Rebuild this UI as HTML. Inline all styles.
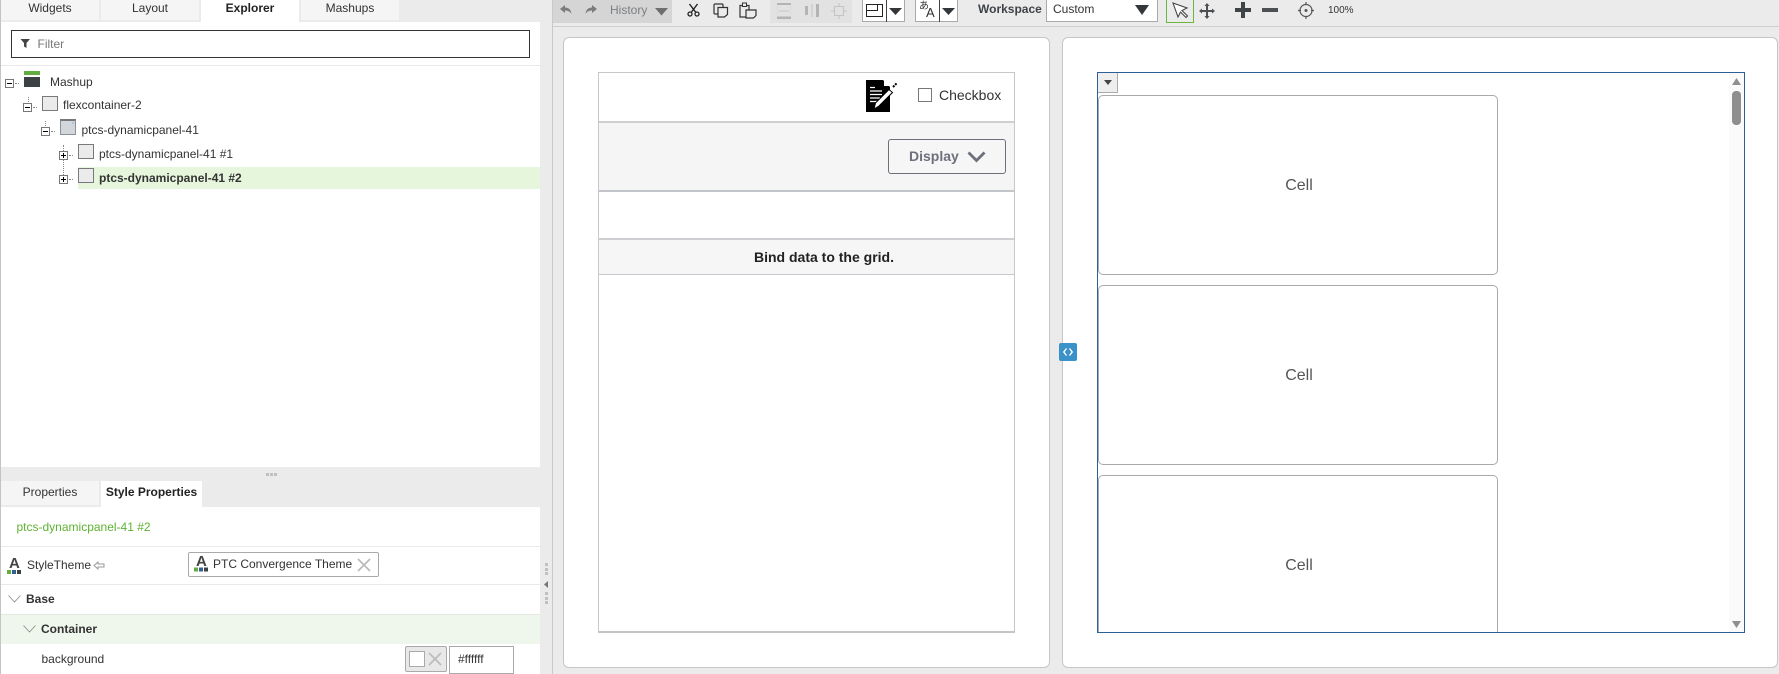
<!DOCTYPE html>
<html><head><meta charset="utf-8"><style>
html,body{margin:0;padding:0;width:1779px;height:674px;overflow:hidden;background:#ebebeb}
body{position:relative;font-family:"Liberation Sans",Arial,sans-serif;font-size:12px;color:#333}
div,svg{position:absolute;box-sizing:border-box}
.t{white-space:nowrap;height:20px;line-height:20px}
.b{font-weight:bold}
.tab{background:#f5f5f5;text-align:center;line-height:16px;height:20px;top:0;width:98px}
.exp{width:9px;height:9px;border:1px solid #777;background:#fff}
.exp:before{content:"";position:absolute;left:1px;top:3px;width:5px;height:1px;background:#000}
.plus:after{content:"";position:absolute;left:3px;top:1px;width:1px;height:5px;background:#000}
.sq{width:16px;height:15px;border:1.5px solid #77797c;background:#ebebeb}
.vd{width:0;border-left:1px dotted #888}
.hd{height:0;border-top:1px dotted #888;width:4px}
.cell{left:1098px;width:400px;border:1px solid #aaa;border-radius:5px;background:#fff}
.ct{left:1099px;width:400px;text-align:center;font-size:16px;color:#555;height:20px;line-height:20px}
.dot{width:3px;height:3px;background:#c0c0c0}
</style></head><body>

<!-- left panel -->
<div style="left:0;top:0;width:540px;height:674px;background:#fff;border-left:1px solid #c4c4c4"></div>
<div style="left:1px;top:0;width:539px;height:22px;background:#ebebeb"></div>
<div class="tab" style="left:1px">Widgets</div>
<div class="tab" style="left:101px">Layout</div>
<div class="tab b" style="left:201px;background:#fff;height:23px;color:#222">Explorer</div>
<div class="tab" style="left:301px">Mashups</div>
<div style="left:11px;top:30px;width:519px;height:28px;border:1.5px solid #333"></div>
<svg style="left:20px;top:38px" width="11" height="11" viewBox="0 0 11 11"><path d="M0.5 1H10L6.5 5V10L4 8.5V5Z" fill="#444"/></svg>
<div class="t" style="left:37.5px;top:33.5px;color:#777">Filter</div>
<div style="left:1px;top:64.5px;width:539px;height:1.5px;background:#e9e9e9"></div>

<div class="exp" style="left:5px;top:79px"></div><div class="hd" style="left:15px;top:83px"></div>
<div style="left:24px;top:71px;width:16px;height:4px;background:#62ad3f"></div>
<div style="left:24px;top:77px;width:16px;height:10px;background:#3c4144"></div>
<div class="t" style="left:50px;top:72px">Mashup</div>

<div class="vd" style="left:27.5px;top:97px;height:7px"></div>
<div class="exp" style="left:23px;top:103px"></div><div class="hd" style="left:33px;top:107px"></div>
<div class="sq" style="left:42px;top:96px"></div>
<div class="t" style="left:63px;top:94.5px">flexcontainer-2</div>

<div class="vd" style="left:45px;top:121px;height:7px"></div>
<div class="exp" style="left:41px;top:127px"></div><div class="hd" style="left:51px;top:131px"></div>
<div style="left:60px;top:119px;width:16px;height:16px;border:1px solid #8b9096;background:#d3d6da;border-top:2px solid #777"></div>
<div style="left:72px;top:122px;width:2px;height:2px;background:#a9c6dc"></div>
<div class="t" style="left:81.5px;top:119.5px">ptcs-dynamicpanel-41</div>

<div class="vd" style="left:63px;top:145px;height:36px"></div>
<div class="exp plus" style="left:59px;top:151px"></div><div class="hd" style="left:69px;top:155px"></div>
<div class="sq" style="left:78px;top:144px"></div>
<div class="t" style="left:99px;top:143.5px">ptcs-dynamicpanel-41 #1</div>

<div style="left:78px;top:167px;width:462px;height:22px;background:#e6f6dd"></div>
<div class="exp plus" style="left:59px;top:175px"></div><div class="hd" style="left:69px;top:179px"></div>
<div class="sq" style="left:78px;top:168px"></div>
<div class="t b" style="left:99px;top:167.5px">ptcs-dynamicpanel-41 #2</div>

<!-- bottom panel -->
<div style="left:1px;top:467px;width:539px;height:40px;background:#ebebeb"></div>
<div class="dot" style="left:266px;top:473px;width:2.5px;height:2.5px"></div><div class="dot" style="left:270px;top:473px;width:2.5px;height:2.5px"></div><div class="dot" style="left:274px;top:473px;width:2.5px;height:2.5px"></div>
<div class="tab" style="left:1px;top:481px;height:24px;line-height:22px">Properties</div>
<div class="tab b" style="left:101px;top:481px;height:26px;width:101px;background:#fff;line-height:22px;color:#222">Style Properties</div>
<div class="t" style="left:16.5px;top:517px;color:#5fb233">ptcs-dynamicpanel-41 #2</div>
<div style="left:1px;top:546px;width:539px;height:1px;background:#e9e9e9"></div>

<svg style="left:7px;top:557px" width="15" height="18" viewBox="0 0 15 18"><text x="2" y="11" font-family="Liberation Sans" font-weight="bold" font-size="15" fill="#444">A</text><rect x="0" y="13" width="4" height="4" fill="#62ad3f"/><rect x="5" y="13" width="4" height="4" fill="#33618f"/><rect x="10" y="13" width="4" height="4" fill="#3c4144"/></svg>
<div class="t" style="left:27px;top:555px">StyleTheme</div>
<svg style="left:93px;top:561px" width="12" height="9" viewBox="0 0 12 9"><path d="M5 1L1 4.5L5 8V6H11V3H5Z" fill="none" stroke="#999"/></svg>
<div style="left:188px;top:552px;width:191px;height:25px;border:1px solid #aaa;border-radius:2px;background:#fff"></div>
<svg style="left:194px;top:555px" width="15" height="18" viewBox="0 0 15 18"><text x="2" y="11" font-family="Liberation Sans" font-weight="bold" font-size="15" fill="#444">A</text><rect x="0" y="12.5" width="4" height="4" fill="#62ad3f"/><rect x="5" y="12.5" width="4" height="4" fill="#33618f"/><rect x="10" y="12.5" width="4" height="4" fill="#3c4144"/></svg>
<div class="t" style="left:213px;top:554px">PTC Convergence Theme</div>
<svg style="left:357px;top:558px" width="14" height="14" viewBox="0 0 14 14"><path d="M1 1L13 13M13 1L1 13" stroke="#bcbcbc" stroke-width="1.8"/></svg>
<div style="left:1px;top:584px;width:539px;height:1px;background:#e9e9e9"></div>
<svg style="left:8px;top:595px" width="13" height="8" viewBox="0 0 13 8"><path d="M.5 .5L6.5 7L12.5 .5" fill="none" stroke="#888" stroke-width=".8"/></svg>
<div class="t b" style="left:26px;top:588.5px">Base</div>
<div style="left:1px;top:614px;width:539px;height:30px;background:#eff6ec;border-top:1px solid #e5e8e3"></div>
<svg style="left:23px;top:625px" width="13" height="8" viewBox="0 0 13 8"><path d="M.5 .5L6.5 7L12.5 .5" fill="none" stroke="#888" stroke-width=".8"/></svg>
<div class="t b" style="left:41px;top:618.5px">Container</div>
<div class="t" style="left:41.5px;top:648.5px">background</div>
<div style="left:405px;top:646px;width:42px;height:26px;background:#e8e8e8;border:1px solid #aaa;border-radius:2px"></div>
<div style="left:409px;top:651px;width:16px;height:16px;background:#fff;border:1px solid #aaa"></div>
<svg style="left:428px;top:652px" width="14" height="14" viewBox="0 0 14 14"><path d="M1 1L13 13M13 1L1 13" stroke="#bcbcbc" stroke-width="1.8"/></svg>
<div style="left:449px;top:646px;width:65px;height:28px;background:#fff;border:1px solid #aaa"></div>
<div class="t" style="left:458px;top:649px">#ffffff</div>

<!-- splitter -->
<div style="left:552px;top:0;width:1px;height:674px;background:#c9c9c9"></div>
<div class="dot" style="left:544.5px;top:563px"></div><div class="dot" style="left:544.5px;top:568px"></div><div class="dot" style="left:544.5px;top:572px"></div>
<svg style="left:544px;top:581px" width="5" height="7" viewBox="0 0 5 7"><path d="M0 3.5L4 0V7Z" fill="#777"/></svg>
<div class="dot" style="left:544.5px;top:592px"></div><div class="dot" style="left:544.5px;top:597px"></div><div class="dot" style="left:544.5px;top:601px"></div>

<!-- toolbar -->
<div style="left:553px;top:26px;width:1226px;height:1px;background:#cfcfcf"></div>
<div style="left:553px;top:0;width:119px;height:23px;background:#d5d5d5"></div>
<svg style="left:560px;top:5px" width="12" height="10" viewBox="0 0 12 10"><path d="M5 0L0 4L5 8V5.5C8 5.5 10 6.5 11.5 9C11 5 9 2.5 5 2.5Z" fill="#7c7c7c"/></svg>
<svg style="left:585px;top:5px" width="12" height="10" viewBox="0 0 12 10"><path d="M7 0L12 4L7 8V5.5C4 5.5 2 6.5 .5 9C1 5 3 2.5 7 2.5Z" fill="#7c7c7c"/></svg>
<div class="t" style="left:610px;top:0;color:#7b7f84">History</div>
<svg style="left:655px;top:8px" width="13" height="8" viewBox="0 0 13 8"><path d="M0 0H13L6.5 7.5Z" fill="#6e6e6e"/></svg>
<svg style="left:687px;top:3px" width="13" height="14" viewBox="0 0 13 14"><path d="M2.5 1L8.5 9M10.5 1L4.5 9" stroke="#222" stroke-width="1.4"/><circle cx="3" cy="11" r="2" fill="none" stroke="#222" stroke-width="1.3"/><circle cx="10" cy="11" r="2" fill="none" stroke="#222" stroke-width="1.3"/></svg>
<svg style="left:713px;top:3px" width="16" height="15" viewBox="0 0 16 15"><rect x="1" y="1" width="9" height="10" rx="1" fill="#ebebeb" stroke="#333" stroke-width="1.2"/><path d="M5 4.5H14.5V11.500L11.500 14H5Z" fill="#ebebeb" stroke="#333" stroke-width="1.2"/></svg>
<svg style="left:739px;top:2px" width="18" height="17" viewBox="0 0 18 17"><path d="M1 3.5H10V15H1Z" fill="#ebebeb" stroke="#333" stroke-width="1.2"/><rect x="3.5" y="1" width="4" height="3.5" fill="#ebebeb" stroke="#333"/><path d="M7 8H17V13.5L14.5 16H7Z" fill="#ebebeb" stroke="#333" stroke-width="1.2"/></svg>
<div style="left:770px;top:0;width:82px;height:23px;background:#e2e2e2"></div>
<svg style="left:777px;top:3px" width="14" height="16" viewBox="0 0 14 16"><path d="M0 0H14V2H0Z M0 13.5H14V16H0Z" fill="#b4b4b4"/><path d="M0 4V12M14 4V12" stroke="#c4c4c4" stroke-dasharray="1 1"/><path d="M2 8H12" stroke="#c4c4c4"/></svg>
<svg style="left:805px;top:3px" width="14" height="16" viewBox="0 0 14 16"><path d="M0 3H3V12H0Z M11 1H14V14H11Z" fill="#b4b4b4"/><path d="M7 1V14" stroke="#c4c4c4"/></svg>
<svg style="left:831px;top:3px" width="16" height="16" viewBox="0 0 16 16"><rect x="3.5" y="3.5" width="9" height="9" fill="none" stroke="#c4c4c4"/><path d="M8 0V3M8 13V16M0 8H3M13 8H16" stroke="#c4c4c4"/></svg>

<div style="left:862px;top:-1px;width:43px;height:23px;background:#fff;border:1px solid #aaa"></div>
<div style="left:886px;top:0;width:1px;height:22px;background:#444"></div>
<svg style="left:866px;top:4px" width="17" height="13" viewBox="0 0 17 13"><path d="M.5 .5H16.5V12.5H.5ZM.5 6.5H11.5V.5" fill="none" stroke="#222"/></svg>
<svg style="left:889px;top:8px" width="13" height="7" viewBox="0 0 13 7"><path d="M0 0H13L6.5 7Z" fill="#33373a"/></svg>
<div style="left:915px;top:-1px;width:43px;height:23px;background:#fff;border:1px solid #aaa"></div>
<div style="left:939px;top:0;width:1px;height:22px;background:#444"></div>
<div style="left:919px;top:1px;font-size:10px;line-height:11px;font-family:'Liberation Sans','Noto Sans CJK JP',sans-serif;color:#333">あ</div>
<div style="left:926px;top:6px;font-size:13px;line-height:14px;color:#333">A</div>
<svg style="left:942px;top:8px" width="13" height="7" viewBox="0 0 13 7"><path d="M0 0H13L6.5 7Z" fill="#33373a"/></svg>

<div class="t b" style="left:978px;top:-1px;color:#3f4347">Workspace</div>
<div style="left:1046px;top:-1px;width:112px;height:23px;background:#fff;border:1px solid #aaa"></div>
<div class="t" style="left:1053px;top:-1px">Custom</div>
<svg style="left:1135px;top:5px" width="14" height="10" viewBox="0 0 14 10"><path d="M0 0H14L7 10Z" fill="#33373a"/></svg>
<div style="left:1166px;top:-1px;width:28px;height:24px;border:1px solid #6db33f"></div>
<svg style="left:1172px;top:2px" width="17" height="17" viewBox="0 0 17 17"><path d="M1 1L6 15L8.5 10L14 15.5L15.5 14L10 8.5L15 6Z" fill="#fff" stroke="#444" stroke-width="1.1"/></svg>
<svg style="left:1199px;top:3px" width="16" height="16" viewBox="0 0 16 16"><path d="M8 0L10.5 3H9V7H13V5.5L16 8L13 10.5V9H9V13H10.5L8 16L5.5 13H7V9H3V10.5L0 8L3 5.5V7H7V3H5.5Z" fill="#4c5053"/></svg>
<div style="left:1235px;top:8px;width:16px;height:4px;background:#3f4447"></div><div style="left:1241px;top:2px;width:4px;height:16px;background:#3f4447"></div>
<div style="left:1262px;top:8px;width:16px;height:4px;background:#4c5053"></div>
<svg style="left:1298px;top:2px" width="16" height="17" viewBox="0 0 16 17"><circle cx="8" cy="8.5" r="6" fill="none" stroke="#555" stroke-width="1.2"/><circle cx="8" cy="8.5" r="1.5" fill="#555"/><path d="M8 0V3M8 14V17M0 8.5H3M13 8.5H16" stroke="#555" stroke-width="1.2"/></svg>
<div class="t" style="left:1328px;top:.5px;font-size:10px">100%</div>

<!-- canvas panel 1 -->
<div style="left:563px;top:37px;width:487px;height:631px;background:#fff;border:1px solid #c6c6c6;border-radius:6px"></div>
<div style="left:598px;top:72px;width:417px;height:561px;background:#fff;border:1px solid #c8c8c8;border-bottom:2px solid #c4c4c4"></div>
<div style="left:599px;top:121px;width:415px;height:2px;background:#cfcfcf"></div>
<div style="left:599px;top:123px;width:415px;height:67px;background:#f5f5f5"></div>
<div style="left:599px;top:190px;width:415px;height:2px;background:#c2c6cb"></div>
<div style="left:599px;top:238px;width:415px;height:2px;background:#cdcfd2"></div>
<div style="left:599px;top:240px;width:415px;height:34px;background:#f6f6f7"></div>
<div style="left:599px;top:274px;width:415px;height:1px;background:#c5cad0"></div>
<svg style="left:866px;top:80px" width="32" height="32" viewBox="0 0 32 32"><path d="M0 0H17L24 7V32H0Z" fill="#000"/><path d="M18 0L24 6H18Z" fill="#fff"/><path d="M4 7.5H9M4 11H16M4 14.5H16M4 18H14M4 21.500H11" stroke="#fff" stroke-width="1.300"/><path d="M8 29L9.5 23L23 9.500L26.500 12.500L13 26Z" fill="#fff" stroke="#000" stroke-width="1"/><path d="M27 7L31 3" stroke="#000" stroke-width="2" stroke-dasharray="2 1"/></svg>
<div style="left:918px;top:88px;width:14px;height:14px;border:1px solid #777;background:#fff"></div>
<div class="t" style="left:939px;top:85px;font-size:14px">Checkbox</div>
<div style="left:888px;top:139px;width:118px;height:35px;border:1px solid #6d6f7b;border-radius:3px;background:#f6f6f7"></div>
<div class="t b" style="left:909px;top:146px;font-size:14px;color:#6d6f7b">Display</div>
<svg style="left:967px;top:151px" width="19" height="12" viewBox="0 0 19 12"><path d="M1.5 1.5L9.5 9.5L17.5 1.5" fill="none" stroke="#6d6f7b" stroke-width="2.8"/></svg>
<div class="t b" style="left:754px;top:247px;font-size:14px;color:#222">Bind data to the grid.</div>

<!-- canvas panel 2 -->
<div style="left:1062px;top:37px;width:716px;height:631px;background:#fff;border:1px solid #c6c6c6;border-radius:6px"></div>
<div style="left:1729px;top:73px;width:15px;height:559px;background:#fafafa"></div>
<div class="cell" style="top:95px;height:180px"></div>
<div class="ct" style="top:176px">Cell</div>
<div class="cell" style="top:285px;height:180px"></div>
<div class="ct" style="top:366px">Cell</div>
<div class="cell" style="top:475px;height:170px;border-bottom:none;border-radius:5px 5px 0 0"></div>
<div class="ct" style="top:556px">Cell</div>
<div style="left:1098px;top:633px;width:646px;height:20px;background:#fff"></div>
<div style="left:1097px;top:72px;width:648px;height:561px;border:1px solid #2d6099;border-top-width:1.5px"></div>
<div style="left:1098px;top:73px;width:20px;height:20px;background:#eee;border-right:1px solid #aaa;border-bottom:1px solid #aaa"></div>
<svg style="left:1104px;top:80px" width="8" height="5" viewBox="0 0 8 5"><path d="M0 0H8L4 5Z" fill="#444"/></svg>
<svg style="left:1732px;top:78px" width="9" height="7" viewBox="0 0 9 7"><path d="M4.5 0L9 7H0Z" fill="#8e8e8e"/></svg>
<div style="left:1732px;top:91px;width:9px;height:34px;background:#8e8e8e;border-radius:4px"></div>
<svg style="left:1732px;top:621px" width="9" height="7" viewBox="0 0 9 7"><path d="M0 0H9L4.5 7Z" fill="#8e8e8e"/></svg>

<!-- handle -->
<div style="left:1059px;top:343px;width:18px;height:18px;background:#3a93c8;border-radius:2px"></div>
<svg style="left:1063px;top:348px" width="10" height="8" viewBox="0 0 10 8"><path d="M3.5 .5L.8 4L3.500 7.500M6.500 .5L9.200 4L6.500 7.500" fill="none" stroke="#fff" stroke-width="1.400"/></svg>

</body></html>
